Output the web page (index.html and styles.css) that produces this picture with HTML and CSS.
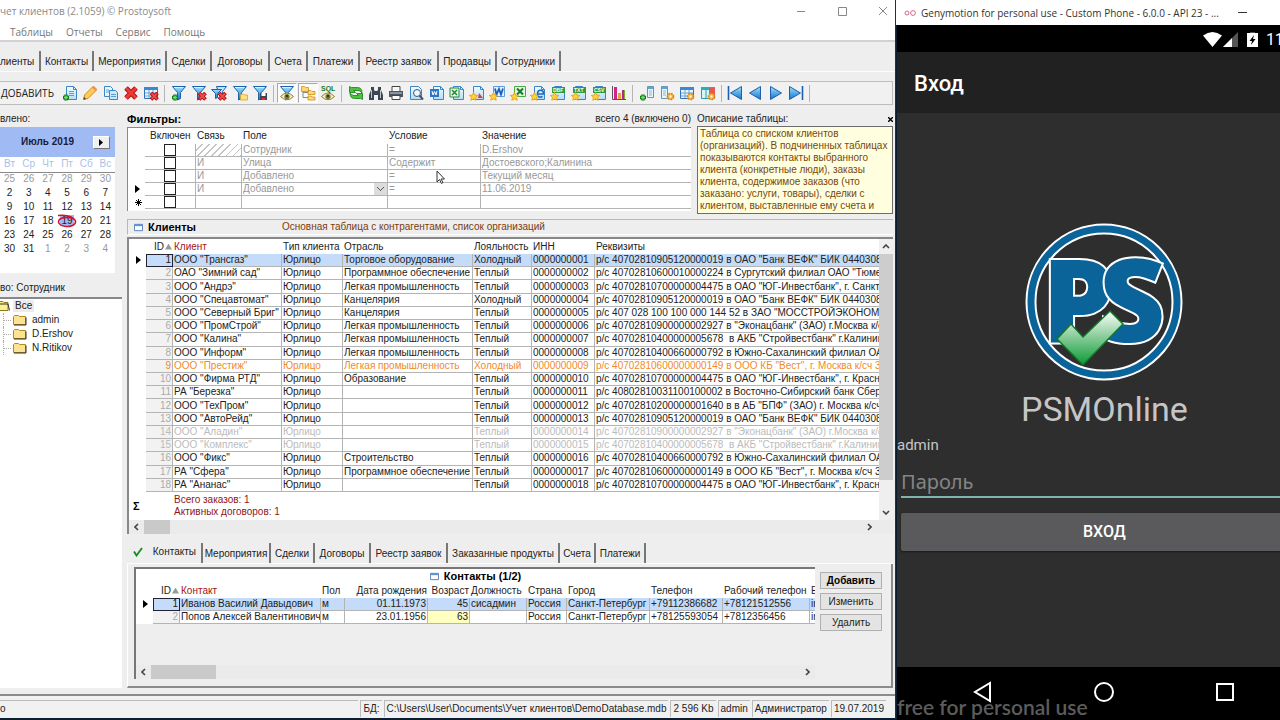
FILE: index.html
```html
<!DOCTYPE html>
<html lang="ru">
<head>
  <meta charset="UTF-8">
  <title>Учет клиентов</title>
  <link rel="stylesheet" href="styles.css">
</head>
<body>

<!-- toolbar icon set -->
<svg class="sprite" aria-hidden="true">
  <defs>
    <linearGradient id="gBlue" x1="0" y1="0" x2="0" y2="1">
      <stop offset="0" stop-color="#9fe0fb"/><stop offset="1" stop-color="#1273cf"/>
    </linearGradient>
    <linearGradient id="gDoc" x1="0" y1="0" x2="0" y2="1">
      <stop offset="0" stop-color="#f4fbff"/><stop offset="1" stop-color="#b4dcf4"/>
    </linearGradient>
  </defs>
  <symbol id="doc" viewBox="0 0 16 16"><path d="M4.500 1.500h7l3 3v10h-10z" fill="url(#gDoc)" stroke="#3b86c4"/><path d="M11.500 1.500v3h3" fill="none" stroke="#3b86c4"/></symbol>
  <symbol id="plus" viewBox="0 0 16 16"><path d="M1 12.500h6M4 9.500v6" stroke="#137a1c" stroke-width="3.400"/><path d="M2 12.500h4M4 10.500v4" stroke="#6fe070" stroke-width="1.400"/></symbol>
  <symbol id="funnel" viewBox="0 0 16 16"><path d="M1.500 1.500h13l-5 6v6l-3 1.500v-7.500z" fill="url(#gBlue)" stroke="#1a62ae"/><path d="M3 2.500h9" stroke="#d8f6ff"/></symbol>
  <symbol id="cross" viewBox="0 0 16 16"><path d="M8 8l6.500 6.500M14.500 8L8 14.500" stroke="#a50d12" stroke-width="3.800"/><path d="M8.500 8.500l5.500 5.500M14 8.500L8.500 14" stroke="#f04a42" stroke-width="2"/></symbol>
  <symbol id="star" viewBox="0 0 16 16"><path d="M4.500 7.500l1.300 2.600 2.900.3-2.100 2 .6 2.900-2.700-1.400-2.700 1.400.6-2.900-2.100-2 2.900-.3z" fill="#ffd23a" stroke="#e29a12" stroke-width=".8"/></symbol>
  <symbol id="eye" viewBox="0 0 16 16"><path d="M1.500 11.500q6.500-7 13 0-6.500 6.500-13 0z" fill="#f5eeb9" stroke="#8b7f35"/><circle cx="8" cy="11.500" r="2.600" fill="#77722e"/><circle cx="8" cy="11" r="1" fill="#222"/></symbol>
  <symbol id="table" viewBox="0 0 16 16"><path d="M1.500 2.500h13v11h-13z" fill="#eaf5ff" stroke="#3271b4"/><path d="M1 3.500h14" stroke="#3c86d2" stroke-width="3"/><path d="M2 8h12M2 11h12M6 5v8M10 5v8" stroke="#6da5da"/></symbol>
  <symbol id="gear" viewBox="0 0 16 16"><circle cx="11.500" cy="11.500" r="3" fill="#ffc04a" stroke="#d98518" stroke-width="1.600" stroke-dasharray="2 .8"/><circle cx="11.500" cy="11.500" r="1" fill="#fff"/></symbol>
  <symbol id="folder" viewBox="0 0 14 12"><path d="M.5 2.500l1-1h4l1 1h6v8H.5z" fill="#fbe392" stroke="#b08a1e"/><path d="M13 3.500V11H1" fill="none" stroke="#333"/></symbol>
  <symbol id="win" viewBox="0 0 10 10"><path d="M.5 1.500h9v7h-9z" fill="#fff" stroke="#4b78bc"/><path d="M1 2.500h8" stroke="#5b92dc" stroke-width="2"/></symbol>
</svg>

<div class="desktop">

  <main class="app">
    <header class="titlebar">
      <span class="titlebar-text">чет клиентов (2.1059) © Prostoysoft</span>
      <div class="window-buttons">
        <button aria-label="Свернуть"><svg width="10" height="10"><path d="M1 5.500h8" stroke="#888"/></svg></button>
        <button aria-label="Развернуть"><svg width="10" height="10"><path d="M1.500 1.500h8v8h-8z" fill="none" stroke="#888"/></svg></button>
        <button aria-label="Закрыть"><svg width="10" height="10"><path d="M1 1l8 8M9 1L1 9" stroke="#888"/></svg></button>
      </div>
    </header>

    <nav class="menu">
      <button>Таблицы</button>
      <button>Отчеты</button>
      <button>Сервис</button>
      <button>Помощь</button>
    </nav>

    <div class="tabs tabs-main">
      <button class="w-40 active">лиенты</button>
      <button class="w-53">Контакты</button>
      <button class="w-73">Мероприятия</button>
      <button class="w-45">Сделки</button>
      <button class="w-58">Договоры</button>
      <button class="w-38">Счета</button>
      <button class="w-52">Платежи</button>
      <button class="w-79">Реестр заявок</button>
      <button class="w-58">Продавцы</button>
      <button class="w-64">Сотрудники</button>
    </div>

    <div class="toolbar">
      <button class="add-button">ДОБАВИТЬ</button>
      <div class="tools">
        <button aria-label="Новая запись"><svg viewBox="0 0 16 16"><use href="#doc"/><path d="M7 6.500h5M7 8.500h5M7 10.500h5" stroke="#5a9fd4"/><use href="#plus"/></svg></button>
        <button aria-label="Изменить запись"><svg viewBox="0 0 16 16"><path d="M1.500 14.500l1-4.500 8.500-8.500 3.500 3.500-8.500 8.500z" fill="#ffcb55" stroke="#d48a20"/><path d="M10 2.500l3.500 3.500 1.500-2-3-3z" fill="#f08a6a"/><path d="M1.500 14.500l.5-2.500 2 2z" fill="#333"/></svg></button>
        <button aria-label="Копировать"><svg viewBox="0 0 16 16"><path d="M1.500 1.500h6l2 2v8h-8z" fill="#e6f5fe" stroke="#3b86c4"/><path d="M6.500 5.500h6l2 2v7h-8z" fill="#cbe9fa" stroke="#3b86c4"/><path d="M8 9.500h5M8 11.500h5M3 5h3M3 7h3" stroke="#5a9fd4"/></svg></button>
        <button aria-label="Удалить запись"><svg viewBox="0 0 16 16"><path d="M3 3l10 10M13 3L3 13" stroke="#b01014" stroke-width="5"/><path d="M3 3l10 10M13 3L3 13" stroke="#ee3a34" stroke-width="3"/></svg></button>
        <button aria-label="Удалить все"><svg viewBox="0 0 16 16"><use href="#table"/><use href="#cross"/></svg></button>
        <i class="sep"></i>
        <button aria-label="Добавить фильтр"><svg viewBox="0 0 16 16"><use href="#funnel"/><use href="#plus"/></svg></button>
        <button aria-label="Удалить фильтр"><svg viewBox="0 0 16 16"><use href="#funnel"/><use href="#cross"/></svg></button>
        <button aria-label="Удалить фильтры"><svg viewBox="0 0 16 16"><path d="M5.500 1.500h10l-4 5v5l-2 1z" fill="#bfe6fb" stroke="#1a62ae"/><path d="M.5 4.500h10l-4 4v4l-2 1v-5z" fill="url(#gBlue)" stroke="#1a62ae"/><use href="#cross"/></svg></button>
        <button aria-label="Открыть фильтр"><svg viewBox="0 0 16 16"><use href="#funnel"/><path d="M8.500 10l1-1h2l1 1h3v5h-7z" fill="#ffe07a" stroke="#d9a32b" stroke-width=".8"/></svg></button>
        <button aria-label="Сохранить фильтр"><svg viewBox="0 0 16 16"><use href="#funnel"/><path d="M8 8h7v7h-7z" fill="#3f4654"/><path d="M9.500 8h4v3h-4z" fill="#fff"/><path d="M10 13h3v2h-3z" fill="#d33"/></svg></button>
        <i class="sep"></i>
        <button class="pressed" aria-label="Показать фильтры"><svg viewBox="0 0 16 16"><use href="#funnel"/><use href="#eye"/></svg></button>
        <button class="pressed" aria-label="Показать дерево"><svg viewBox="0 0 16 16"><path d="M3 5v7.500h5M3 7.500h5" fill="none" stroke="#888"/><path d="M1.500 1.500h3l1 1h3v4h-7zM8 5.500h3l1 1h3v3h-7zM8 11h3l1 1h3v3h-7z" fill="#ffd873" stroke="#c99020" stroke-width=".8"/></svg></button>
        <button aria-label="Показать SQL"><svg viewBox="0 0 16 16"><text class="icon-text" x="1" y="6">SQL</text><use href="#eye"/></svg></button>
        <i class="sep"></i>
        <button aria-label="Обновить"><svg viewBox="0 0 16 16"><path d="M1.500 1.500v6h6L5.500 5.500h4.500q2.500 0 4 2.500 0-5.500-4.500-5.500H3.500z" fill="#4cc238" stroke="#17801b" stroke-width=".8"/><path d="M14.500 14.500v-6h-6l2 2H6q-2.500 0-4-2.500 0 5.500 4.500 5.500h6z" fill="#4cc238" stroke="#17801b" stroke-width=".8"/></svg></button>
        <button aria-label="Поиск"><svg viewBox="0 0 16 16"><path d="M3 2h3v3l1 1h2l1-1V2h3v3l2 5v5h-5v-5H6v5H1v-5l2-5z" fill="#3e4751"/><path d="M3.500 5v8M12.500 5v8" stroke="#b9c5cf"/></svg></button>
        <button aria-label="Печать"><svg viewBox="0 0 16 16"><path d="M4 1.500h8v5H4z" fill="#f8f8f8" stroke="#444"/><path d="M1 6h14v6H1z" fill="#4b5660"/><path d="M2 8h12" stroke="#c7d2da"/><path d="M4 10.500h8v4H4z" fill="#fff" stroke="#444"/></svg></button>
        <button aria-label="Предпросмотр"><svg viewBox="0 0 16 16"><path d="M2.500 1.500h8l3 3v10h-11z" fill="url(#gDoc)" stroke="#3b86c4"/><circle cx="9" cy="8" r="3.500" fill="#e9f8ff" stroke="#456"/><path d="M11.500 10.500l3.500 4" stroke="#456" stroke-width="2"/></svg></button>
        <button aria-label="Word"><svg viewBox="0 0 16 16"><use href="#doc"/><path d="M1 4h9v8H1z" fill="#2a76c8"/><path d="M3 6l1 4 1.500-3.500L7 10l1-4" fill="none" stroke="#fff"/></svg></button>
        <button aria-label="Excel"><svg viewBox="0 0 16 16"><use href="#doc"/><path d="M1 3h9v9H1z" fill="#e9f8e7" stroke="#1d8a35"/><path d="M3 5l5 5M8 5l-5 5" stroke="#1d8a35" stroke-width="1.600"/></svg></button>
        <button aria-label="Шаблон"><svg viewBox="0 0 16 16"><use href="#doc"/><path d="M10 8l4 5h-5z" fill="#d8423c"/><use href="#star"/></svg></button>
        <button aria-label="Шаблон Word"><svg viewBox="0 0 16 16"><path d="M4.500 1.500h11v10h-11z" fill="#dff0fc" stroke="#5f9fd8"/><path d="M6 3.500l1.500 6L10 4l2 5.500 2-6" fill="none" stroke="#1b5fb8" stroke-width="1.800"/><use href="#star"/></svg></button>
        <button aria-label="Шаблон Excel"><svg viewBox="0 0 16 16"><path d="M4.500 1.500h11v10h-11z" fill="#e5f7e2" stroke="#4ca64c"/><path d="M7 3.500l6 6M13 3.500l-6 6" stroke="#147a28" stroke-width="2"/><use href="#star"/></svg></button>
        <button aria-label="HTML"><svg viewBox="0 0 16 16"><use href="#doc"/><path d="M12.500 11.500q-5 2-5-2.500t4-3.500q2.500.5 2 3.500h-6" fill="none" stroke="#1769c2" stroke-width="1.600"/><use href="#star"/></svg></button>
        <button aria-label="DBF"><svg viewBox="0 0 16 16"><use href="#doc"/><path d="M2 2h13v6H2z" fill="#2d9c3c"/><text class="icon-label" x="3" y="7">DBF</text><use href="#star"/></svg></button>
        <button aria-label="TXT"><svg viewBox="0 0 16 16"><use href="#doc"/><path d="M2 2h13v6H2z" fill="#2d9c3c"/><text class="icon-label" x="3" y="7">TXT</text><use href="#star"/></svg></button>
        <button aria-label="CSV"><svg viewBox="0 0 16 16"><use href="#doc"/><path d="M2 2h13v6H2z" fill="#2d9c3c"/><text class="icon-label" x="3" y="7">CSV</text><use href="#star"/></svg></button>
        <button aria-label="Диаграмма"><svg viewBox="0 0 16 16"><path d="M1.500 1v13.500H15" fill="none" stroke="#555"/><path d="M3 2h3v12H3z" fill="#d6228c"/><path d="M7 8h3v6H7z" fill="#e8a33a"/><path d="M11 5h3v9h-3z" fill="#b02a86"/><path d="M13 5h1v9h-1z" fill="#7fae2a"/></svg></button>
        <i class="sep"></i>
        <button aria-label="Добавить поле"><svg viewBox="0 0 16 16"><path d="M8.500 1.500h6v11h-6z" fill="#e6f5fe" stroke="#6f93ad"/><path d="M9 3h5" stroke="#5aa4dc" stroke-width="2"/><path d="M10 6h3M10 8h3M10 10h3" stroke="#9bb"/><use href="#plus"/></svg></button>
        <button aria-label="Настроить поле"><svg viewBox="0 0 16 16"><path d="M2.500 1.500h6v12h-6z" fill="#e6f5fe" stroke="#6f93ad"/><path d="M3 3h5" stroke="#5aa4dc" stroke-width="2"/><path d="M4 6h3M4 8h3M4 10h3" stroke="#9bb"/><use href="#gear"/></svg></button>
        <button aria-label="Настроить таблицу"><svg viewBox="0 0 16 16"><use href="#table"/><use href="#gear"/></svg></button>
        <button aria-label="Настроить форму"><svg viewBox="0 0 16 16"><path d="M1.500 2.500h13v11h-13z" fill="#d8f6f4" stroke="#2a9aa8"/><path d="M1 3.500h14" stroke="#24b0b8" stroke-width="3"/><path d="M9 3h6v9H9z" fill="#e4594f"/><path d="M6 5v8" stroke="#2a9aa8"/><use href="#gear"/></svg></button>
        <i class="sep"></i>
        <button aria-label="Первая"><svg viewBox="0 0 16 16"><path d="M1.500 1v14" stroke="#1d5fae" stroke-width="1.600"/><path d="M14.500 1.500v13L3.500 8z" fill="url(#gBlue)" stroke="#1d5fae"/></svg></button>
        <button aria-label="Предыдущая"><svg viewBox="0 0 16 16"><path d="M13.500 1.500v13L2.500 8z" fill="url(#gBlue)" stroke="#1d5fae"/></svg></button>
        <button aria-label="Следующая"><svg viewBox="0 0 16 16"><path d="M2.500 1.500v13L13.500 8z" fill="url(#gBlue)" stroke="#1d5fae"/></svg></button>
        <button aria-label="Последняя"><svg viewBox="0 0 16 16"><path d="M14.500 1v14" stroke="#1d5fae" stroke-width="1.600"/><path d="M1.500 1.500v13L12.500 8z" fill="url(#gBlue)" stroke="#1d5fae"/></svg></button>
      </div>
      <i class="sep"></i>
    </div>

    <div class="workspace">

      <aside class="sidebar">
        <div class="caption">влено:</div>
        <div class="calendar">
          <div class="calendar-head">
            <strong>Июль 2019</strong>
            <button aria-label="Следующий месяц"><svg width="5" height="7"><path d="M0 0l4 3.500L0 7z"/></svg></button>
          </div>
          <table>
            <thead><tr><th>Вт</th><th>Ср</th><th>Чт</th><th>Пт</th><th>Сб</th><th>Вс</th></tr></thead>
            <tbody>
              <tr class="off"><td>25</td><td>26</td><td>27</td><td>28</td><td>29</td><td>30</td></tr>
              <tr><td>2</td><td>3</td><td>4</td><td>5</td><td>6</td><td>7</td></tr>
              <tr><td>9</td><td>10</td><td>11</td><td>12</td><td>13</td><td>14</td></tr>
              <tr><td>16</td><td>17</td><td>18</td><td class="today"><span>19</span><svg class="today-mark" viewBox="0 0 20 14"><path d="M1 1.500q8-1 13 1.500 6 3 4 6.500-3 3.500-9 3-7-1-7.500-4.500 0-4 7-4.500 6-.5 9 2" fill="none" stroke="#d3132c" stroke-width="1.600"/></svg></td><td>20</td><td>21</td></tr>
              <tr><td>23</td><td>24</td><td>25</td><td>26</td><td>27</td><td>28</td></tr>
              <tr><td>30</td><td>31</td><td class="off">1</td><td class="off">2</td><td class="off">3</td><td class="off">4</td></tr>
            </tbody>
          </table>
        </div>
        <div class="caption">во: Сотрудник</div>
        <ul class="tree">
          <li class="root"><svg viewBox="4 0 10 12" width="10" height="12"><path d="M-1 1.500h8l1 1h4v8H-1z" fill="#fdf08a" stroke="#8a7a20"/><path d="M4 4l8 0 1.500 6.500" fill="none" stroke="#333"/></svg><span>Все</span></li>
          <li><i class="branch"></i><svg width="14" height="12"><use href="#folder"/></svg>admin</li>
          <li><i class="branch"></i><svg width="14" height="12"><use href="#folder"/></svg>D.Ershov</li>
          <li><i class="branch"></i><svg width="14" height="12"><use href="#folder"/></svg>N.Ritikov</li>
        </ul>
      </aside>

      <section class="content">

        <div class="top-row">
          <div class="filters">
            <div class="caption"><strong>Фильтры:</strong><span>всего 4 (включено 0)</span></div>
            <div class="filters-frame">
              <table class="grid grid-filters">
                <colgroup><col class="c-17"><col class="c-51"><col class="c-46"><col class="c-146"><col class="c-93"><col></colgroup>
                <thead><tr><th></th><th>Включен</th><th>Связь</th><th>Поле</th><th>Условие</th><th>Значение</th></tr></thead>
                <tbody>
                  <tr><td class="mark"></td><td class="check"><input type="checkbox" aria-label="Включить фильтр Сотрудник"></td><td class="hatch"></td><td>Сотрудник</td><td>=</td><td>D.Ershov</td></tr>
                  <tr><td class="mark"></td><td class="check"><input type="checkbox" aria-label="Включить фильтр Улица"></td><td>И</td><td>Улица</td><td>Содержит</td><td>Достоевского;Калинина</td></tr>
                  <tr><td class="mark"></td><td class="check"><input type="checkbox" aria-label="Включить фильтр Добавлено"></td><td>И</td><td>Добавлено</td><td>=</td><td>Текущий месяц</td></tr>
                  <tr><td class="mark"><svg width="5" height="8"><path d="M0 0l5 4-5 4z"/></svg></td><td class="check"><input type="checkbox" aria-label="Включить фильтр по дате"></td><td>И</td><td class="pick"><select aria-label="Поле фильтра"><option>Добавлено</option></select></td><td>=</td><td>11.06.2019</td></tr>
                  <tr><td class="mark"><svg width="7" height="7"><path d="M3.500 0v7M0 3.500h7M1 1l5 5M6 1L1 6" stroke="#000"/></svg></td><td class="check"><input type="checkbox" aria-label="Новый фильтр"></td><td></td><td></td><td></td><td></td></tr>
                </tbody>
              </table>
            </div>
          </div>
          <div class="description">
            <div class="caption"><label for="descr">Описание таблицы:</label><button aria-label="Закрыть описание"><svg width="5" height="5"><path d="M0 0l5 5M5 0L0 5" stroke="#000" stroke-width="1.400"/></svg></button></div>
            <textarea id="descr" readonly>Таблица со списком клиентов
(организаций). В подчиненных таблицах
показываются контакты выбранного
клиента (конкретные люди), заказы
клиента, содержимое заказов (что
заказано: услуги, товары), сделки с
клиентом, выставленные ему счета и</textarea>
          </div>
        </div>

        <div class="table-title">
          <svg width="9" height="9"><use href="#win"/></svg>
          <strong>Клиенты</strong>
          <span>Основная таблица с контрагентами, список организаций</span>
        </div>

        <div class="clients">
          <div class="clients-view">
            <table class="grid grid-clients">
              <colgroup><col class="c-17"><col class="c-27"><col class="c-109"><col class="c-61"><col class="c-130"><col class="c-59"><col class="c-63"><col></colgroup>
              <thead><tr><th></th><th class="num">ID<i class="sort"></i></th><th class="red">Клиент</th><th>Тип клиента</th><th>Отрасль</th><th>Лояльность</th><th>ИНН</th><th>Реквизиты</th></tr></thead>
              <tbody>
                <tr class="selected"><td class="mark"><svg width="5" height="8"><path d="M0 0l5 4-5 4z"/></svg></td><td class="id">1</td><td>ООО "Трансгаз"</td><td>Юрлицо</td><td>Торговое оборудование</td><td>Холодный</td><td>0000000001</td><td>р/с 40702810905120000019 в ОАО "Банк ВЕФК" БИК 0440308</td></tr>
                <tr><td class="mark"></td><td class="id">2</td><td>ОАО "Зимний сад"</td><td>Юрлицо</td><td>Программное обеспечение</td><td>Теплый</td><td>0000000002</td><td>р/с 40702810600010000224 в Сургутский филиал ОАО "Тюмен</td></tr>
                <tr><td class="mark"></td><td class="id">3</td><td>ООО "Андрэ"</td><td>Юрлицо</td><td>Легкая промышленность</td><td>Теплый</td><td>0000000003</td><td>р/с 40702810700000004475 в ОАО "ЮГ-Инвестбанк", г. Санкт-П</td></tr>
                <tr><td class="mark"></td><td class="id">4</td><td>ООО "Спецавтомат"</td><td>Юрлицо</td><td>Канцелярия</td><td>Холодный</td><td>0000000004</td><td>р/с 40702810905120000019 в ОАО "Банк ВЕФК" БИК 0440308</td></tr>
                <tr><td class="mark"></td><td class="id">5</td><td>ООО "Северный Бриг"</td><td>Юрлицо</td><td>Канцелярия</td><td>Теплый</td><td>0000000005</td><td>р/с 407 028 100 100 000 144 52 в ЗАО "МОССТРОЙЭКОНОМБА</td></tr>
                <tr><td class="mark"></td><td class="id">6</td><td>ООО "ПромСтрой"</td><td>Юрлицо</td><td>Легкая промышленность</td><td>Теплый</td><td>0000000006</td><td>р/с 40702810900000002927 в "Эконацбанк" (ЗАО) г.Москва к/с</td></tr>
                <tr><td class="mark"></td><td class="id">7</td><td>ООО "Калина"</td><td>Юрлицо</td><td>Легкая промышленность</td><td>Теплый</td><td>0000000007</td><td>р/с 40702810400000005678  в АКБ "Стройвестбанк" г.Калинин</td></tr>
                <tr><td class="mark"></td><td class="id">8</td><td>ООО "Информ"</td><td>Юрлицо</td><td>Легкая промышленность</td><td>Теплый</td><td>0000000008</td><td>р/с 40702810400660000792 в Южно-Сахалинский филиал ОАО</td></tr>
                <tr class="orange"><td class="mark"></td><td class="id">9</td><td>ООО "Престиж"</td><td>Юрлицо</td><td>Легкая промышленность</td><td>Холодный</td><td>0000000009</td><td>р/с 40702810600000000149 в ООО КБ "Вест", г. Москва к/сч 3</td></tr>
                <tr><td class="mark"></td><td class="id">10</td><td>ООО "Фирма РТД"</td><td>Юрлицо</td><td>Образование</td><td>Теплый</td><td>0000000010</td><td>р/с 40702810700000004475 в ОАО "ЮГ-Инвестбанк", г. Красно</td></tr>
                <tr><td class="mark"></td><td class="id">11</td><td>РА "Березка"</td><td>Юрлицо</td><td></td><td>Теплый</td><td>0000000011</td><td>р/с 40802810031100100002 в Восточно-Сибирский банк Сберба</td></tr>
                <tr><td class="mark"></td><td class="id">12</td><td>ООО "ТехПром"</td><td>Юрлицо</td><td></td><td>Теплый</td><td>0000000012</td><td>р/с 40702810200000001640 в в АБ "БПФ" (ЗАО) г. Москва к/сч</td></tr>
                <tr><td class="mark"></td><td class="id">13</td><td>ООО "АвтоРейд"</td><td>Юрлицо</td><td></td><td>Теплый</td><td>0000000013</td><td>р/с 40702810905120000019 в ОАО "Банк ВЕФК" БИК 0440308</td></tr>
                <tr class="pale"><td class="mark"></td><td class="id">14</td><td>ООО "Аладин"</td><td>Юрлицо</td><td></td><td>Теплый</td><td>0000000014</td><td>р/с 40702810900000002927 в "Эконацбанк" (ЗАО) г.Москва к/с</td></tr>
                <tr class="pale"><td class="mark"></td><td class="id">15</td><td>ООО "Комплекс"</td><td>Юрлицо</td><td></td><td>Теплый</td><td>0000000015</td><td>р/с 40702810400000005678  в АКБ "Стройвестбанк" г.Калинин</td></tr>
                <tr><td class="mark"></td><td class="id">16</td><td>ООО "Фикс"</td><td>Юрлицо</td><td>Строительство</td><td>Теплый</td><td>0000000016</td><td>р/с 40702810400660000792 в Южно-Сахалинский филиал ОАО</td></tr>
                <tr><td class="mark"></td><td class="id">17</td><td>РА "Сфера"</td><td>Юрлицо</td><td>Программное обеспечение</td><td>Теплый</td><td>0000000017</td><td>р/с 40702810600000000149 в ООО КБ "Вест", г. Москва к/сч 3</td></tr>
                <tr><td class="mark"></td><td class="id">18</td><td>РА "Ананас"</td><td>Юрлицо</td><td></td><td>Теплый</td><td>0000000018</td><td>р/с 40702810700000004475 в ОАО "ЮГ-Инвестбанк", г. Красно</td></tr>
              </tbody>
            </table>
            <div class="totals">
              <strong>Σ</strong>
              <p>Всего заказов: 1<br>Активных договоров: 1</p>
            </div>
          </div>
          <div class="vscroll">
            <button aria-label="Вверх"><svg width="8" height="5"><path d="M1 4l3-3 3 3" /></svg></button>
            <div class="thumb"></div>
            <button aria-label="Вниз"><svg width="8" height="5"><path d="M1 1l3 3 3-3"/></svg></button>
          </div>
          <div class="hscroll">
            <button aria-label="Влево"><svg width="5" height="8"><path d="M4 1L1 4l3 3"/></svg></button>
            <div class="thumb"></div>
            <button aria-label="Вправо"><svg width="5" height="8"><path d="M1 1l3 3-3 3"/></svg></button>
          </div>
        </div>

        <div class="tabs tabs-sub">
          <button class="w-76 active"><svg class="tick" width="10" height="10"><path d="M1 4.500l2.500 4L9 1" fill="none" stroke="#128a1e" stroke-width="1.800"/></svg>Контакты</button>
          <button class="w-68">Мероприятия</button>
          <button class="w-44">Сделки</button>
          <button class="w-56">Договоры</button>
          <button class="w-77">Реестр заявок</button>
          <button class="w-112">Заказанные продукты</button>
          <button class="w-36">Счета</button>
          <button class="w-50">Платежи</button>
        </div>

        <div class="sub-page">
          <div class="contacts">
            <div class="contacts-title"><svg width="9" height="9"><use href="#win"/></svg><strong>Контакты (1/2)</strong></div>
            <table class="grid grid-contacts">
              <colgroup><col class="c-17"><col class="c-27"><col class="c-141"><col class="c-24"><col class="c-83"><col class="c-42"><col class="c-57"><col class="c-40"><col class="c-83"><col class="c-73"><col class="c-87"><col></colgroup>
              <thead><tr><th></th><th class="num">ID<i class="sort"></i></th><th class="red">Контакт</th><th>Пол</th><th class="num">Дата рождения</th><th class="num">Возраст</th><th>Должность</th><th>Страна</th><th>Город</th><th>Телефон</th><th>Рабочий телефон</th><th>E</th></tr></thead>
              <tbody>
                <tr class="selected"><td class="mark"><svg width="5" height="8"><path d="M0 0l5 4-5 4z"/></svg></td><td class="id">1</td><td>Иванов Василий Давыдович</td><td>м</td><td class="num">01.11.1973</td><td class="num">45</td><td>сисадмин</td><td>Россия</td><td>Санкт-Петербург</td><td>+79112386682</td><td>+78121512556</td><td>in</td></tr>
                <tr><td class="mark"></td><td class="id">2</td><td>Попов Алексей Валентинович</td><td>м</td><td class="num">23.01.1956</td><td class="num yellow">63</td><td></td><td>Россия</td><td>Санкт-Петербург</td><td>+78125593054</td><td>+7812356456</td><td>in</td></tr>
              </tbody>
            </table>
            <div class="hscroll hscroll-sub">
              <button aria-label="Влево"><svg width="5" height="8"><path d="M4 1L1 4l3 3"/></svg></button>
              <div class="thumb"></div>
              <button aria-label="Вправо"><svg width="5" height="8"><path d="M1 1l3 3-3 3"/></svg></button>
            </div>
          </div>
          <div class="actions">
            <button class="primary">Добавить</button>
            <button>Изменить</button>
            <button>Удалить</button>
          </div>
        </div>
      </section>
    </div>

    <footer class="statusbar">
      <span class="grow">о</span>
      <span>БД:</span>
      <span>C:\Users\User\Documents\Учет клиентов\DemoDatabase.mdb</span>
      <span>2 596 Kb</span>
      <span>admin</span>
      <span>Администратор</span>
      <span>19.07.2019</span>
    </footer>

    <svg class="cursor" width="10" height="15" viewBox="0 0 10 15"><path d="M1 1v11l2.500-2.500 2 4 1.500-1-2-3.500h3.500z" fill="#fff" stroke="#333"/></svg>
  </main>

  <section class="emulator">
    <header class="emulator-title">
      <svg width="12" height="6"><circle cx="3" cy="3" r="2" fill="none" stroke="#d8688c"/><circle cx="9" cy="3" r="2.400" fill="none" stroke="#d8688c"/></svg>
      <span>Genymotion for personal use - Custom Phone - 6.0.0 - API 23 - ...</span>
      <button aria-label="Свернуть эмулятор"><svg width="10" height="10"><path d="M0 5.500h9" stroke="#333"/></svg></button>
    </header>
    <div class="phone">
      <div class="phone-status">
        <svg width="20" height="16"><path d="M0 3.500q9.500-7 19 0L9.500 15z" fill="#fff"/></svg>
        <svg width="16" height="16"><path d="M15 0v15H0z" fill="#555"/><path d="M9 6v9H0z" fill="#fff"/></svg>
        <svg class="battery" width="11" height="16"><path d="M3 0h5v2H3z" fill="#555"/><path d="M0 1h11v14H0z" fill="#fff"/><path d="M7 3L2.500 9H5l-1 4 4.500-6H6z" fill="#000"/></svg>
        <span>11:21</span>
      </div>
      <h1 class="phone-bar">Вход</h1>
      <form class="login">
        <svg class="logo" width="158" height="158" viewBox="0 0 158 158">
          <defs>
            <linearGradient id="gTick" x1="0" y1="0" x2="0" y2="1">
              <stop offset="0" stop-color="#ffffff"/><stop offset=".45" stop-color="#8fcf9f"/><stop offset="1" stop-color="#0a9a34"/>
            </linearGradient>
          </defs>
          <circle cx="79" cy="79" r="73" fill="none" stroke="#fff" stroke-width="11"/>
          <circle cx="79" cy="79" r="73" fill="none" stroke="#0a6499" stroke-width="7"/>
          <text class="logo-letters" y="119"><tspan x="17">P</tspan><tspan x="74">S</tspan></text>
          <path d="M32 116l14-15 12 13 27-26 13 13-40 41z" fill="url(#gTick)" stroke="#0c7a26" stroke-width="1.500"/>
        </svg>
        <div class="product">PSMOnline</div>
        <div class="user">admin</div>
        <input type="password" placeholder="Пароль" aria-label="Пароль">
        <button type="button">ВХОД</button>
      </form>
      <nav class="phone-nav">
        <button aria-label="Назад"><svg width="20" height="22"><path d="M17 2v18L2 11z"/></svg></button>
        <button aria-label="Домой"><svg width="22" height="22"><circle cx="11" cy="11" r="9"/></svg></button>
        <button aria-label="Обзор"><svg width="20" height="20"><path d="M2 2h16v16H2z"/></svg></button>
        <span class="watermark">free for personal use</span>
      </nav>
    </div>
  </section>

</div>

</body>
</html>
```

FILE: styles.css
```css
* {
  box-sizing: border-box;
}

body {
  margin: 0;
  font-family: "Liberation Sans", Arial, sans-serif;
  font-size: 10px;
  line-height: 12px;
  color: #222;
  background: #0b1d30;
}

button {
  font: inherit;
  color: inherit;
  background: none;
  border: none;
  padding: 0;
  cursor: pointer;
}

svg {
  flex: none;
}

.sprite {
  position: absolute;
  width: 0;
  height: 0;
}

.desktop {
  display: flex;
  height: 100vh;
  overflow: hidden;
}

/* ---------- desktop application ---------- */

.app {
  position: relative;
  flex: 0 0 70%;
  min-width: 0;
  display: flex;
  flex-direction: column;
  background: #eeeeee;
  border-right: 1px solid #17324a;
  border-bottom: 2px solid #0b1d30;
}

.titlebar {
  display: flex;
  justify-content: space-between;
  align-items: center;
  height: 21px;
  background: #fff;
  color: #8a8a8a;
  font-family: "Open Sans", sans-serif;
}

.window-buttons {
  display: flex;
  gap: 31px;
  padding-right: 7px;
}

.window-buttons button {
  display: flex;
}

.menu {
  display: flex;
  gap: 13px;
  height: 21px;
  padding: 2px 10px 0;
  background: #fff;
  border-bottom: 2px solid #d2d2d2;
  color: #777;
  font-family: "Open Sans", sans-serif;
}

.tabs {
  display: flex;
  border-bottom: 1px solid #fcfcfc;
}

.tabs button {
  height: 20px;
  padding-top: 2px;
  border-right: 2px solid #777;
  text-align: center;
  white-space: nowrap;
}

.tabs-main {
  padding-top: 9px;
  margin-bottom: 9px;
}

.tabs-main .active {
  text-align: left;
}

.tabs-sub {
  padding-top: 9px;
}

.tabs-sub .active {
  display: flex;
  align-items: center;
  justify-content: space-between;
  padding: 0 5px 2px 6px;
}

.w-36 { width: 36px; }
.w-38 { width: 38px; }
.w-40 { width: 41px; }
.w-44 { width: 44px; }
.w-45 { width: 45px; }
.w-50 { width: 50px; }
.w-52 { width: 52px; }
.w-53 { width: 53px; }
.w-56 { width: 56px; }
.w-58 { width: 58px; }
.w-64 { width: 64px; }
.w-68 { width: 68px; }
.w-73 { width: 73px; }
.w-76 { width: 76px; }
.w-77 { width: 77px; }
.w-79 { width: 79px; }
.w-112 { width: 112px; }

.toolbar {
  display: flex;
  align-items: center;
  height: 24px;
  margin-right: 2px;
  background: #f1f1f1;
  border: 1px solid #bdbdbd;
  border-left: none;
}

.add-button {
  width: 60px;
  padding-left: 1px;
  text-align: left;
  font-family: "Open Sans", sans-serif;
}

.tools {
  display: flex;
  justify-content: space-between;
  align-items: center;
  flex: 0 0 746px;
}

.tools button {
  width: 20px;
  height: 20px;
  padding: 2px;
}

.tools svg {
  display: block;
  width: 16px;
  height: 16px;
}

.tools .pressed {
  background: #fafafa;
  border: 1px solid #a8a8a8;
  border-right-color: #fff;
  border-bottom-color: #fff;
  padding: 1px;
}

.sep {
  width: 7px;
  height: 17px;
  background: linear-gradient(#b5b5b5, #b5b5b5) center / 1px 100% no-repeat;
}

.icon-text {
  font: bold 7px "Liberation Sans", sans-serif;
  fill: #1c7a22;
}

.icon-label {
  font: bold 5px "Liberation Sans", sans-serif;
  fill: #fff;
}

.workspace {
  flex: 1;
  min-height: 0;
  display: flex;
  gap: 5px;
  padding: 7px 2px 6px 0;
  border-bottom: 2px solid #8b8b8b;
}

.caption {
  display: flex;
  justify-content: space-between;
  align-items: center;
  height: 14px;
  white-space: nowrap;
}

.caption button {
  display: flex;
}

strong {
  font-size: 11px;
  color: #000;
}

/* calendar and tree */

.sidebar {
  flex: 0 0 122px;
  display: flex;
  flex-direction: column;
}

.calendar {
  margin: 1px 7px 8px 0;
  height: 146px;
  background: #fff;
}

.calendar-head {
  display: flex;
  align-items: center;
  justify-content: space-between;
  height: 30px;
  padding: 0 5px 0 21px;
  background: #a0bbf3;
}

.calendar-head strong {
  font-size: 10px;
  color: #1a1a3a;
}

.calendar-head button {
  display: flex;
  align-items: center;
  justify-content: center;
  width: 17px;
  height: 13px;
  background: #f0f0f0;
  border: 1px solid #fff;
  border-right-color: #777;
  border-bottom-color: #777;
}

.calendar table {
  width: 115px;
  border-collapse: collapse;
  table-layout: fixed;
  text-align: center;
}

.calendar th {
  height: 15px;
  padding: 0;
  font-weight: normal;
  color: #a9bfe8;
  border-bottom: 1px solid #888;
}

.calendar td {
  position: relative;
  height: 14px;
  padding: 0;
}

.calendar .off {
  color: #999;
}

.today span {
  background: #a0bbf3;
  padding: 0 1px;
}

.today-mark {
  position: absolute;
  left: 0;
  top: 0;
  width: 20px;
  height: 14px;
}

.tree {
  flex: 1;
  margin: 2px 0 0;
  padding: 0;
  list-style: none;
  background: #fff;
  border-top: 2px solid #888;
}

.tree li {
  display: flex;
  align-items: center;
  gap: 5px;
  height: 14px;
  margin-left: 3px;
}

.tree .branch {
  width: 9px;
  height: 14px;
  margin-right: -4px;
  border-left: 1px dotted #aaa;
  background: repeating-linear-gradient(90deg, #aaa 0 1px, #fff 1px 2px) 0 7px / 9px 1px no-repeat;
}

.tree .root {
  gap: 3px;
  margin-left: 0;
}

.tree .root span {
  background: #ececec;
  padding: 0 2px;
}

/* filters */

.content {
  flex: 1;
  min-width: 0;
  display: flex;
  flex-direction: column;
}

.top-row {
  display: flex;
  gap: 6px;
}

.filters {
  flex: 1;
  min-width: 0;
}

.filters-frame {
  height: 84px;
  margin-top: 1px;
  background: #fff;
  border: 1px solid #888;
  border-right: none;
  border-bottom: none;
}

.description {
  flex: 0 0 196px;
}

.description textarea {
  display: block;
  width: 100%;
  height: 88px;
  padding: 1px 2px;
  border: 1px solid #6d6d6d;
  background: #ffffdf;
  color: #7a4708;
  font: 10px/12px "Liberation Sans", Arial, sans-serif;
  white-space: pre;
  overflow: hidden;
  resize: none;
}

.grid {
  width: 100%;
  table-layout: fixed;
  border-collapse: separate;
  border-spacing: 0;
  background: #fff;
}

.grid th,
.grid td {
  height: 13px;
  padding: 0 1px;
  text-align: left;
  font-weight: normal;
  white-space: pre;
  overflow: hidden;
}

.grid th {
  height: 15px;
}

.grid td {
  border-right: 1px solid #b4b4b4;
  border-bottom: 1px solid #b4b4b4;
}

.grid td:last-child {
  border-right: none;
}

.grid .mark {
  padding: 0 0 0 7px;
  background: #fff;
  border-bottom-color: #fff;
  border-right: none;
}

.grid .mark svg {
  display: block;
}

.grid .num {
  text-align: right;
}

.grid .red {
  color: #a31515;
}

.grid-filters th {
  height: 16px;
}

.grid-filters td {
  color: #999;
}

.grid-filters .check {
  text-align: center;
}

.grid-filters th:nth-child(2) {
  padding-left: 5px;
}

.grid-filters input {
  display: block;
  appearance: none;
  width: 12px;
  height: 12px;
  margin: 0 auto;
  border: 1px solid #222;
  background: #fff;
}

.hatch {
  background: repeating-linear-gradient(135deg, #fff 0 4px, #c4c4c4 4px 5px);
}

.grid-filters .pick {
  padding: 0;
}

.grid-filters select {
  display: block;
  appearance: none;
  width: 100%;
  height: 12px;
  padding: 0 0 0 1px;
  border: none;
  font: inherit;
  color: inherit;
  background:
    linear-gradient(45deg, transparent 45%, #555 45% 60%, transparent 60%) right 6px center / 4px 4px no-repeat,
    linear-gradient(-45deg, transparent 45%, #555 45% 60%, transparent 60%) right 3px center / 4px 4px no-repeat,
    linear-gradient(#dcdcdc, #dcdcdc) right / 13px 12px no-repeat;
}

.c-17 { width: 17px; }
.c-24 { width: 24px; }
.c-27 { width: 27px; }
.c-40 { width: 40px; }
.c-42 { width: 42px; }
.c-46 { width: 46px; }
.c-51 { width: 51px; }
.c-57 { width: 57px; }
.c-59 { width: 59px; }
.c-61 { width: 61px; }
.c-63 { width: 63px; }
.c-73 { width: 73px; }
.c-83 { width: 83px; }
.c-87 { width: 87px; }
.c-93 { width: 93px; }
.c-109 { width: 109px; }
.c-130 { width: 130px; }
.c-141 { width: 141px; }
.c-146 { width: 146px; }

/* clients */

.table-title {
  display: flex;
  align-items: center;
  height: 16px;
  margin: 5px 0 2px;
  padding-left: 6px;
  border: 1px solid #b8b8b8;
  border-right: none;
  border-bottom-color: #fff;
}

.table-title strong {
  width: 139px;
  padding-left: 5px;
}

.table-title span {
  color: #7a3c10;
}

.clients {
  display: grid;
  grid-template-columns: 1fr 14px;
  grid-template-rows: 1fr 14px;
  height: 297px;
  background: #fff;
  border-top: 2px solid #888;
  border-left: 2px solid #888;
}

.clients-view {
  min-width: 0;
  overflow: hidden;
}

.grid-clients {
  height: 253px;
}

.grid .id {
  text-align: right;
  color: #aaa;
  background: #f2f2f2;
}

.grid .selected td {
  background: #c4dcfa;
}

.grid .selected .mark {
  background: #fff;
}

.grid .selected .id {
  color: #222;
  outline: 1px solid #223;
  outline-offset: -1px;
}

.grid .orange td {
  color: #ef8a2b;
}

.grid .pale td {
  color: #bbb;
}

.grid .yellow {
  background: #ffffc0;
}

.sort {
  display: inline-block;
  width: 7px;
  height: 6px;
  margin-left: 1px;
  background: #999;
  clip-path: polygon(50% 0, 100% 100%, 0 100%);
}

.totals {
  display: flex;
  align-items: center;
  gap: 33px;
  padding: 2px 0 0 4px;
}

.totals strong {
  width: 8px;
}

.totals p {
  margin: 0;
  color: #8f1515;
}

.vscroll {
  display: flex;
  flex-direction: column;
  background: #efefef;
}

.vscroll button,
.hscroll button {
  display: flex;
  align-items: center;
  justify-content: center;
  flex: 0 0 15px;
}

.vscroll path,
.hscroll path {
  fill: none;
  stroke: #444;
  stroke-width: 1.6;
}

.vscroll .thumb {
  height: 226px;
  margin-bottom: auto;
  background: #cdcdcd;
}

.hscroll {
  display: flex;
  grid-column: 1 / -1;
  height: 14px;
  padding-right: 16px;
  background: #ebebeb;
}

.hscroll .thumb {
  width: 26px;
  margin-right: auto;
  background: #c9c9c9;
}

/* related tables */

.sub-page {
  flex: 1;
  display: flex;
  gap: 5px;
  padding: 3px 9px 7px 6px;
  border-left: 1px solid #fff;
  border-right: 2px solid #8b8b8b;
  border-bottom: 2px solid #8b8b8b;
}

.contacts {
  flex: 1;
  min-width: 0;
  display: flex;
  flex-direction: column;
  border-top: 2px solid #777;
  border-left: 2px solid #777;
}

.contacts-title {
  display: flex;
  align-items: center;
  justify-content: center;
  gap: 5px;
  height: 14px;
  background: #fff;
}

.hscroll-sub {
  margin-top: auto;
  padding-right: 0;
}

.hscroll-sub .thumb {
  width: 65px;
}

.actions {
  flex: 0 0 62px;
  display: flex;
  flex-direction: column;
  gap: 4px;
  padding-top: 5px;
}

.actions button {
  height: 17px;
  background: #e4e4e4;
  border: 1px solid #b0b0b0;
}

.actions .primary {
  font-weight: bold;
  color: #000;
}

.statusbar {
  display: flex;
  gap: 2px;
  padding: 4px 9px 1px 0;
  background: #f1f1f1;
  white-space: nowrap;
}

.statusbar span {
  padding: 2px;
  border-top: 1px solid #bbb;
  border-left: 1px solid #bbb;
}

.statusbar .grow {
  flex: 1;
  padding-left: 0;
  border-left: none;
}

.cursor {
  position: absolute;
  left: 436px;
  top: 170px;
}

/* ---------- phone emulator ---------- */

.emulator {
  flex: 1;
  min-width: 0;
  display: flex;
  flex-direction: column;
  overflow: hidden;
}

.emulator-title {
  display: flex;
  align-items: center;
  gap: 5px;
  height: 25px;
  padding-left: 8px;
  background: #fff;
  color: #333;
  font-family: "Open Sans", sans-serif;
  white-space: nowrap;
}

.emulator-title button {
  margin-left: 14px;
}

/* the emulated screen is wider than the visible part */
.phone {
  flex: 1;
  width: 108%;
  display: flex;
  flex-direction: column;
  margin-left: 1px;
  background: #2e2e2e;
  font-family: Roboto, sans-serif;
  color: #fff;
}

.phone-status {
  display: flex;
  align-items: center;
  justify-content: flex-end;
  height: 27px;
  padding: 2px 6px 0 0;
  background: #000;
  font-size: 16px;
}

.battery {
  margin: 0 8px;
}

.phone-bar {
  display: flex;
  align-items: center;
  height: 61px;
  margin: 0;
  padding: 3px 17px 0;
  background: #212121;
  font-size: 22px;
  font-weight: 500;
}

.login {
  flex: 1;
  display: flex;
  flex-direction: column;
  padding-top: 110px;
}

.logo {
  align-self: center;
}

.logo-letters {
  font: 800 115px "Open Sans", sans-serif;
  fill: #0a6499;
  stroke: #fff;
  stroke-width: 4px;
  paint-order: stroke;
}

.product {
  margin-top: 7px;
  text-align: center;
  font-size: 34px;
  line-height: 42px;
  color: #c6c6c6;
}

.user {
  margin: 3px 0 9px;
  font-size: 15px;
  line-height: 24px;
  color: #c6c6c6;
}

.login input {
  height: 32px;
  margin: 0 4px 15px;
  padding: 0;
  border: none;
  border-bottom: 2px solid #80b5ac;
  background: none;
  color: #fff;
  font: 20px "Noto Sans", sans-serif;
}

.login input::placeholder {
  color: #858585;
}

.login button {
  height: 38px;
  margin: 0 4px;
  border-radius: 2px;
  background: #5a595b;
  font-size: 16px;
  font-weight: 500;
  box-shadow: 0 1px 2px #1b1b1b;
}

.phone-nav {
  position: relative;
  display: flex;
  justify-content: center;
  gap: 100px;
  height: 53px;
  background: #000;
}

.phone-nav path,
.phone-nav circle {
  fill: none;
  stroke: #fff;
  stroke-width: 2;
}

.watermark {
  position: absolute;
  left: 0;
  bottom: 0;
  font: 600 21px/26px Lato, sans-serif;
  color: #5c5c5c;
}
```
